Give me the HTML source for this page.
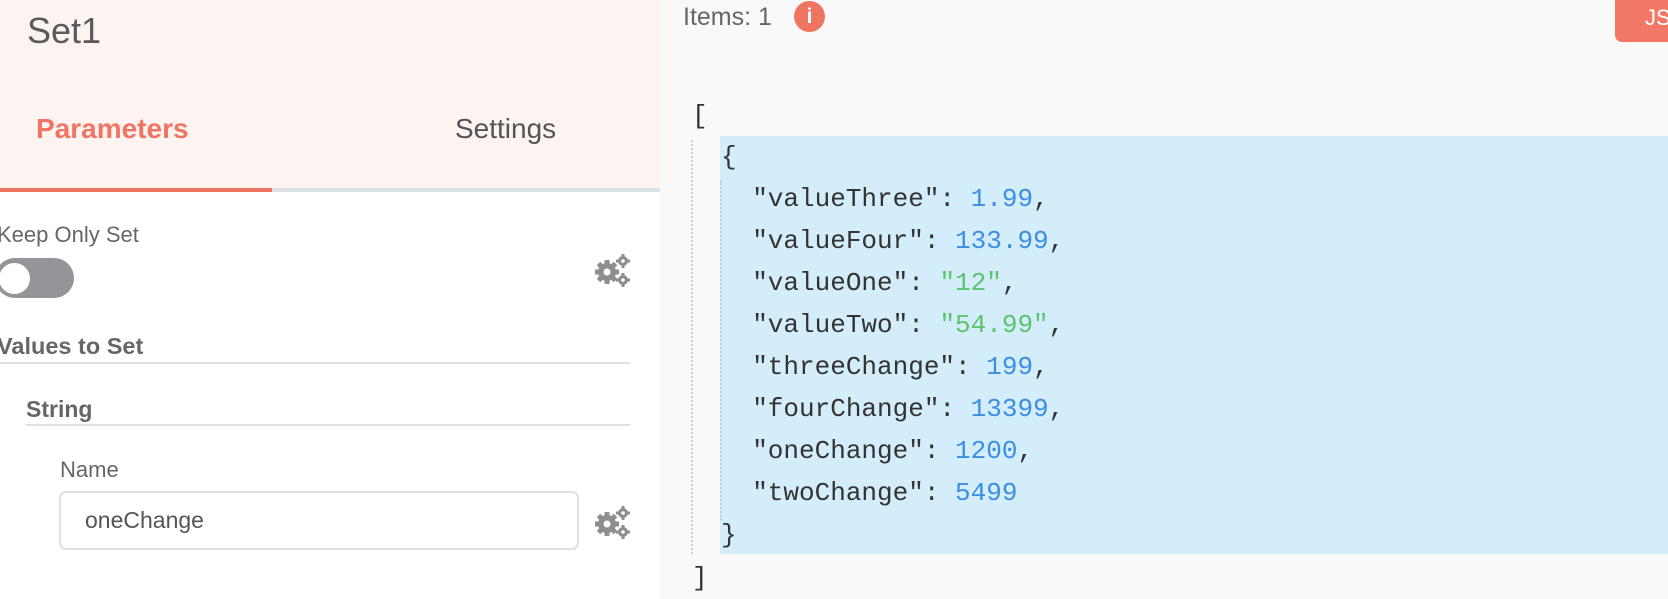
<!DOCTYPE html>
<html><head><meta charset="utf-8"><style>
*{margin:0;padding:0;box-sizing:border-box}
html{background:linear-gradient(to right,#fff 0,#fff 660px,#f9f9f9 660px)}
body{width:1668px;height:578px;overflow:hidden;background:linear-gradient(to right,#fff 0,#fff 660px,#f9f9f9 660px);font-family:"Liberation Sans",sans-serif;position:relative}
.a{position:absolute;white-space:nowrap}
#left{position:absolute;left:0;top:0;width:660px;height:578px;background:#fff}
#hdr{position:absolute;left:0;top:0;width:660px;height:188px;background:#fdf3f1}
.mono{font-family:"Liberation Mono",monospace;font-size:26px;color:#333;line-height:42px;white-space:pre}
.n{color:#3b8ee0}.s{color:#5cc46e}
</style></head><body>
<div id="left">
 <div id="hdr"></div>
 <div class="a" style="left:27px;top:10px;font-size:36px;color:#5a5a5a;line-height:42px">Set1</div>
 <div class="a" style="left:36px;top:112px;font-size:28px;font-weight:bold;color:#f07562;line-height:34px">Parameters</div>
 <div class="a" style="left:455px;top:112px;font-size:28px;color:#555;line-height:34px">Settings</div>
 <div class="a" style="left:0;top:188px;width:660px;height:4px;background:#dde0e5"></div>
 <div class="a" style="left:0;top:188px;width:272px;height:4px;background:#ee7360"></div>
 <div class="a" style="left:-3px;top:221px;font-size:22px;color:#666;line-height:28px">Keep Only Set</div>
 <div class="a" style="left:-5px;top:258px;width:79px;height:40px;border-radius:20px;background:#939598"></div>
 <div class="a" style="left:-1px;top:263px;width:31px;height:31px;border-radius:50%;background:#fff"></div>
 <div class="a" style="left:-3px;top:332px;font-size:23.5px;font-weight:bold;color:#666;line-height:28px">Values to Set</div>
 <div class="a" style="left:0;top:362px;width:630px;height:2px;background:#dde0e5"></div>
 <div class="a" style="left:26px;top:395px;font-size:23px;font-weight:bold;color:#666;line-height:28px">String</div>
 <div class="a" style="left:26px;top:424px;width:604px;height:2px;background:#dde0e5"></div>
 <div class="a" style="left:60px;top:456px;font-size:22px;color:#666;line-height:28px">Name</div>
 <div class="a" style="left:59px;top:491px;width:520px;height:59px;border:2px solid #dde0e5;border-radius:7px;background:#fff"></div>
 <div class="a" style="left:85px;top:505px;font-size:23px;color:#555;line-height:30px">oneChange</div>
 <svg class="a" style="left:594px;top:253px" width="38" height="34" viewBox="0 0 38 34"><g fill="#8e8e8e" stroke="#8e8e8e"><circle cx="13" cy="19" r="9" stroke="none"/><g stroke-width="5"><line x1="13" y1="7" x2="13" y2="31"/><line x1="1" y1="19" x2="25" y2="19"/><line x1="4.5" y1="10.5" x2="21.5" y2="27.5"/><line x1="21.5" y1="10.5" x2="4.5" y2="27.5"/></g><g stroke-width="3"><line x1="29" y1="1" x2="29" y2="15"/><line x1="22" y1="8" x2="36" y2="8"/><line x1="29" y1="20" x2="29" y2="34"/><line x1="22" y1="27" x2="36" y2="27"/></g><circle cx="29" cy="8" r="5" stroke="none"/><circle cx="29" cy="27" r="5" stroke="none"/></g><circle cx="13" cy="19" r="3.5" fill="#fff"/><circle cx="29" cy="8" r="1.8" fill="#fff"/><circle cx="29" cy="27" r="1.8" fill="#fff"/></svg>
 <svg class="a" style="left:594px;top:505px" width="38" height="34" viewBox="0 0 38 34"><g fill="#8e8e8e" stroke="#8e8e8e"><circle cx="13" cy="19" r="9" stroke="none"/><g stroke-width="5"><line x1="13" y1="7" x2="13" y2="31"/><line x1="1" y1="19" x2="25" y2="19"/><line x1="4.5" y1="10.5" x2="21.5" y2="27.5"/><line x1="21.5" y1="10.5" x2="4.5" y2="27.5"/></g><g stroke-width="3"><line x1="29" y1="1" x2="29" y2="15"/><line x1="22" y1="8" x2="36" y2="8"/><line x1="29" y1="20" x2="29" y2="34"/><line x1="22" y1="27" x2="36" y2="27"/></g><circle cx="29" cy="8" r="5" stroke="none"/><circle cx="29" cy="27" r="5" stroke="none"/></g><circle cx="13" cy="19" r="3.5" fill="#fff"/><circle cx="29" cy="8" r="1.8" fill="#fff"/><circle cx="29" cy="27" r="1.8" fill="#fff"/></svg>
</div>
<div class="a" style="left:683px;top:1px;font-size:25px;color:#666;line-height:32px">Items: 1</div>
<div class="a" style="left:794px;top:1px;width:31px;height:31px;border-radius:50%;background:#ee7562;color:#fff;font-weight:bold;font-size:21px;text-align:center;line-height:31px">i</div>
<div class="a" style="left:1615px;top:0;width:60px;height:42px;background:#f07864;border-radius:0 0 0 7px;color:#fff;font-size:22px;line-height:36px;padding-left:30px">JS</div>
<div class="a mono" style="left:692px;top:95px">[</div>
<div class="a" style="left:691px;top:140px;height:414px;border-left:2px dotted #c8ccd4"></div>
<div class="a" style="left:720px;top:136px;width:948px;height:418px;background:#d3edfb"></div>
<div class="a" style="left:720px;top:180px;height:340px;border-left:2px dotted #bcd0dc"></div>
<div class="a mono" style="left:721px;top:136px"><div>{</div><div>  "valueThree": <span class="n">1.99</span>,</div><div>  "valueFour": <span class="n">133.99</span>,</div><div>  "valueOne": <span class="s">"12"</span>,</div><div>  "valueTwo": <span class="s">"54.99"</span>,</div><div>  "threeChange": <span class="n">199</span>,</div><div>  "fourChange": <span class="n">13399</span>,</div><div>  "oneChange": <span class="n">1200</span>,</div><div>  "twoChange": <span class="n">5499</span></div><div>}</div></div>
<div class="a mono" style="left:692px;top:557px">]</div>
</body></html>
